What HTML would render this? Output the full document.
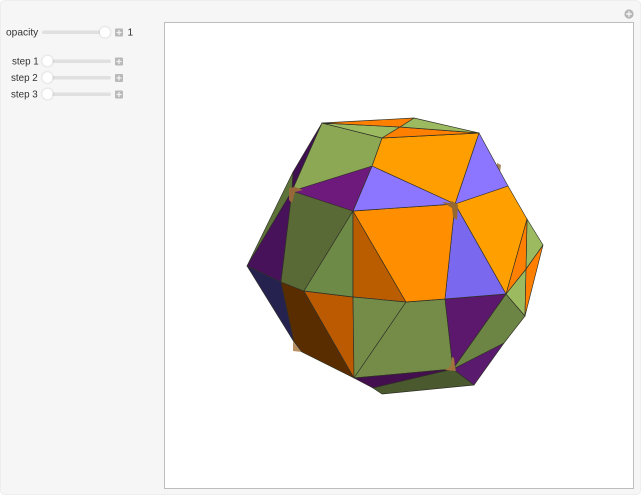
<!DOCTYPE html>
<html>
<head>
<meta charset="utf-8">
<style>
html,body{margin:0;padding:0;width:641px;height:496px;overflow:hidden;background:#fff}
svg{display:block}
text{font-family:"Liberation Sans",sans-serif;font-size:10.2px;fill:#333}
text.t{font-size:9.8px}
.f{stroke:#2f2f26;stroke-width:.65;stroke-linejoin:round}
</style>
</head>
<body>
<svg width="641" height="496" viewBox="0 0 641 496" xmlns="http://www.w3.org/2000/svg">
<defs>
<filter id="s" x="-50%" y="-50%" width="200%" height="200%"><feDropShadow dx="0" dy="0" stdDeviation="1" flood-color="#000" flood-opacity=".25"/></filter>
</defs>
<rect x="0" y="0" width="641" height="496" fill="#fff"/>
<rect x="0.5" y="0.5" width="640" height="494" rx="4" fill="#f6f6f6" stroke="#eeeeee"/>
<rect x="164.5" y="22.5" width="469" height="466" fill="#fff" stroke="#bdbdbd"/>

<!-- controls -->
<text x="6" y="35.7">opacity</text>
<rect x="42" y="30.5" width="66" height="3.5" rx="1.7" fill="#e0e0e0"/>
<circle cx="105" cy="32.3" r="5.2" fill="#fff" filter="url(#s)"/>
<rect x="115" y="28.5" width="8" height="8" rx="1" fill="#b9b9b9"/>
<path d="M119 30v5M116.5 32.5h5" stroke="#f2f2f2" stroke-width="1.2"/>
<text x="127.5" y="35.7">1</text>

<text class="t" x="12" y="64.7">step 1</text>
<rect x="44" y="59.5" width="67" height="3.5" rx="1.7" fill="#e0e0e0"/>
<circle cx="47.5" cy="61" r="5.2" fill="#fff" filter="url(#s)"/>
<rect x="115" y="57.5" width="8" height="8" rx="1" fill="#b9b9b9"/>
<path d="M119 59v5M116.5 61.5h5" stroke="#f2f2f2" stroke-width="1.2"/>

<text class="t" x="11" y="81">step 2</text>
<rect x="44" y="76" width="67" height="3.5" rx="1.7" fill="#e0e0e0"/>
<circle cx="47.5" cy="77.5" r="5.2" fill="#fff" filter="url(#s)"/>
<rect x="115" y="74" width="8" height="8" rx="1" fill="#b9b9b9"/>
<path d="M119 75.5v5M116.5 78h5" stroke="#f2f2f2" stroke-width="1.2"/>

<text class="t" x="11" y="97.3">step 3</text>
<rect x="44" y="92.5" width="67" height="3.5" rx="1.7" fill="#e0e0e0"/>
<circle cx="47.5" cy="94" r="5.2" fill="#fff" filter="url(#s)"/>
<rect x="115" y="90.5" width="8" height="8" rx="1" fill="#b9b9b9"/>
<path d="M119 92v5M116.5 94.5h5" stroke="#f2f2f2" stroke-width="1.2"/>

<circle cx="629" cy="14" r="4.6" fill="#b5b5b5"/>
<path d="M629 11.2v5.6M626.2 14h5.6" stroke="#f6f6f6" stroke-width="1.4"/>

<!-- behind-surface spikes -->
<polygon points="497,163 501,165 500,172 497,170" fill="#a8845a"/>
<polygon points="293,342 302,352 293,351" fill="#b98f62"/>

<!-- polyhedron -->
<g class="f">
<polygon points="293,172 292,191 247,266" fill="#5e7339"/>
<polygon points="322,123 293,172 292,191" fill="#3f1050"/>
<polygon points="292,191 281,282 247,266" fill="#47125a"/>
<polygon points="247,266 281,282 294,342" fill="#25224f"/>
<polygon points="281,282 304,291 354,378 302,352 294,342" fill="#5a2d00"/>
<polygon points="304,291 353,297 354,378" fill="#bb5a00"/>
<polygon points="292,191 353,211 304,291 281,282" fill="#5a6a36"/>
<polygon points="353,211 353,297 304,291" fill="#6e8a47"/>
<polygon points="353,211 406,302 353,297" fill="#ba5c00"/>
<polygon points="353,297 406,302 354,378" fill="#748c47"/>
<polygon points="406,302 445,299 453,369 354,378" fill="#748c47"/>
<polygon points="354,378 453,369 373,388" fill="#440f4e"/>
<polygon points="373,388 453,369 474,385 382,394" fill="#4a5a2e"/>
<polygon points="453,369 504,343 474,385" fill="#5a1a6e"/>
<polygon points="445,299 506,294 453,369" fill="#5c186c"/>
<polygon points="506,294 525,316 504,343 453,369" fill="#6c8444"/>
<polygon points="506,294 526,269 525,316" fill="#9cba5f"/>
<polygon points="526,269 543,245 525,316" fill="#ff8000"/>
<polygon points="527,219 543,245 526,269" fill="#9cba5f"/>
<polygon points="527,219 526,269 506,294" fill="#ff8000"/>
<polygon points="455,204 508,186 527,219 506,294" fill="#ffa000"/>
<polygon points="455,204 506,294 445,299" fill="#7a68ee"/>
<polygon points="353,211 455,204 445,299 406,302" fill="#ff8f00"/>
<polygon points="372,166 455,204 353,211" fill="#8c75ff"/>
<polygon points="479,133 508,186 455,204" fill="#8c75ff"/>
<polygon points="382,138 479,133 455,204 372,166" fill="#ff9e00"/>
<polygon points="292,191 372,166 353,211" fill="#6e1a7c"/>
<polygon points="322,123 382,138 372,166 292,191" fill="#8ca855"/>
<polygon points="322,123 400,127 382,138" fill="#9cba5f"/>
<polygon points="382,138 400,127 479,133" fill="#ff8000"/>
<polygon points="400,127 414,118 479,133" fill="#9cba5f"/>
<polygon points="322,123 414,118 400,127" fill="#ff8000"/>
</g>

<!-- surface spikes -->
<polygon points="289,188 295,187 303,190 295,192 292,203 289,200" fill="#96683a"/>
<polygon points="442,202 450,203 452,201 458,205 457,220 453,217 452,208" fill="#96682f"/>
<polygon points="445,370 451,366 452,357 454,358 455,367 456,371" fill="#a0743c"/>
</svg>
</body>
</html>
